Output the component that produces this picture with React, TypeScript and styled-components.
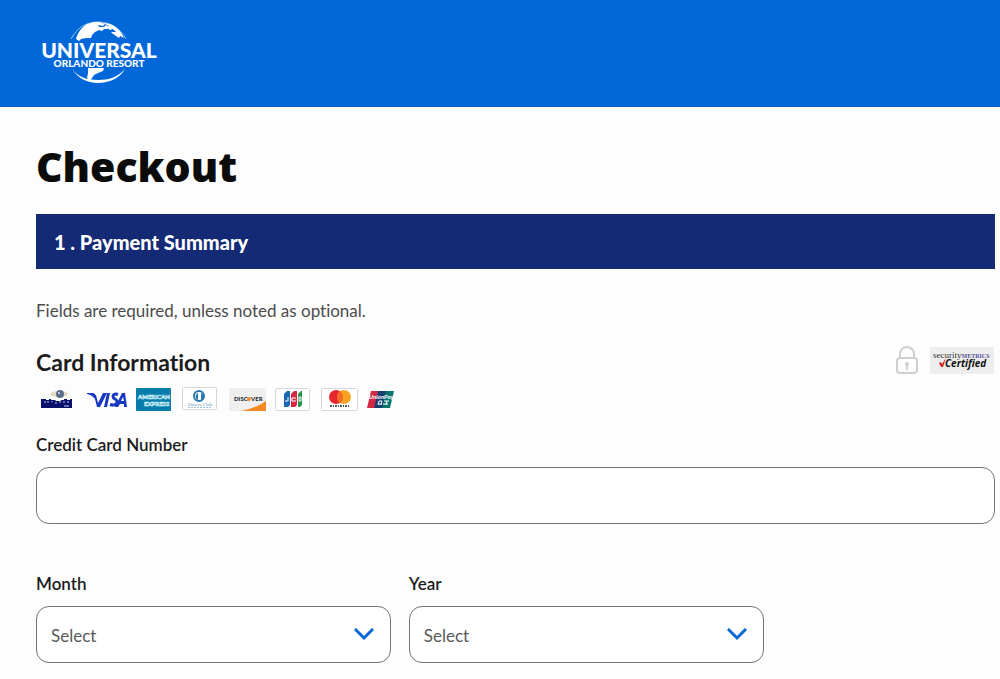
import React from "react";
import styled, { createGlobalStyle } from "styled-components";

const GlobalStyle = createGlobalStyle`
  *, *::before, *::after { box-sizing: border-box; }
  body {
    margin: 0;
    background: #fdfdfd;
    color: #1c1c1c;
    font-family: Lato, "Liberation Sans", sans-serif;
    font-size: 17px;
    font-variant-ligatures: none;
    line-height: 24px;
  }
`;

const Header = styled.header`
  display: flex;
  align-items: center;
  padding: 20px 40px 22px;
  background: #0268da;
  border-bottom: 1px solid #0a5cc0;
`;

const HomeLink = styled.a`
  display: block;
  height: 64px;
`;

const Main = styled.main`
  padding: 32px 5px 16px 36px;
`;

const Title = styled.h1`
  margin: 0;
  color: #0b0b0b;
  font-family: "Open Sans", sans-serif;
  font-size: 41px;
  font-weight: 800;
  line-height: 54px;
`;

const StepBar = styled.h2`
  margin: 21px 0 0;
  padding: 16px 18px 15px;
  background: #152a75;
  color: #fff;
  font-size: 20px;
  font-weight: 900;
  line-height: 24px;
`;

const Note = styled.p`
  margin: 30px 0 0;
  color: #4c4c4c;
`;

const SectionHead = styled.div`
  display: flex;
  align-items: flex-start;
  justify-content: space-between;
  margin-top: 23px;
`;

const SectionTitle = styled.h3`
  margin: 0;
  font-size: 23px;
  font-weight: 700;
  line-height: 32px;
`;

const Badges = styled.div`
  display: flex;
  align-items: center;
  gap: 11px;
  padding-right: 1px;
`;

const Cards = styled.ul`
  display: flex;
  align-items: center;
  gap: 9px;
  margin: 9px 0 0;
  padding: 0 5px;
  list-style: none;
`;

const CardItem = styled.li`
  display: flex;
  height: 26px;
`;

const Field = styled.div`
  display: flex;
  flex-direction: column;
  gap: 10px;
`;

const CardField = styled(Field)`
  margin-top: 20px;
`;

const Label = styled.label`
  font-size: 17px;
  font-weight: 600;
  line-height: 24px;
`;

const TextInput = styled.input`
  width: 100%;
  height: 57px;
  padding: 0 14px;
  border: 1px solid #747474;
  border-radius: 13px;
  background: #fff;
  color: #4c4c4c;
  font: inherit;
`;

const DateRow = styled.div`
  display: grid;
  grid-template-columns: 37% 37%;
  gap: 18px;
  margin-top: 48px;
`;

const SelectWrap = styled.div`
  display: grid;
  align-items: center;
  & > * { grid-area: 1 / 1; }
`;

const SelectBox = styled.select`
  appearance: none;
  width: 100%;
  height: 57px;
  padding: 2px 48px 0 14px;
  border: 1px solid #747474;
  border-radius: 13px;
  background: #fff;
  color: #5a5a5a;
  font: inherit;
`;

const Chevron = styled.svg`
  justify-self: end;
  margin-right: 17px;
  pointer-events: none;
`;

function ResortLogo() {
  return (
    <svg width="118" height="64" viewBox="0 0 118 64" role="img" aria-label="Universal Orlando Resort">
      <path d="M31 19C37 8 46 2 58 2s22 6 28 17" fill="none" stroke="#8fbdf0" strokeWidth="1" />
      <path d="M36 19C38 12 42 7 47 4l7-2 6 0 5 2-2 2-5-1 1 2 5 0 2-2 4 2-3 2-3 0-2 2-3-1-4 2-3 3-1 3h-5l-5 1-2 2z" fill="#fff" />
      <path d="M63 3c10 0 17 6 21 15l-4-2-1 2-6-4-2-2 5 0-3-3-3 1-3-2 2-2z" fill="#fff" />
      <path d="M32 49C38 58 47 63 58 63s22-5 27-14C78 57 69 60 58 60S38 57 32 49z" fill="#fff" />
      <path d="M48 48h16l-1 3-5 2-4 2-4 6-3-3 1-5z" fill="#fff" />
      <g fill="#fff" textAnchor="middle" fontFamily="Lato, sans-serif" fontWeight="900">
        <text x="59" y="38" fontSize="21">UNIVERSAL</text>
        <text x="59" y="47" fontSize="10">ORLANDO RESORT</text>
      </g>
    </svg>
  );
}

const frame = { fill: "#fff", stroke: "#d5d8db", strokeWidth: 1 };

const cards: { name: string; width: number; art: React.ReactNode }[] = [
  {
    name: "Universal Rewards",
    width: 36,
    art: (
      <>
        <ellipse cx="18" cy="7" rx="9" ry="3" fill="#e6d9bf" />
        <circle cx="19" cy="7" r="4" fill="#5a6f8e" />
        <circle cx="18" cy="6" r="1" fill="#d6e0ee" />
        <path d="M0 12h5v1h3v-1h2v1h4l1 1h4l2-1h2v-1h3v1h3v-1h2v9H0z" fill="#07106b" />
        <path d="M4 14v2M7 14v2M11 14v1M15 15v2M19 14v2M23 14v2M27 14v2M23 19h5" stroke="#cad0e8" strokeWidth="1" />
      </>
    ),
  },
  {
    name: "Visa",
    width: 41,
    art: (
      <>
        <path d="M1 6h6l2 1 2 8C9 11 6 8 1 7z" fill="#1838c4" />
        <path d="M8 8l3 12h3l7-14h-4l-5 10-2-8z" fill="#1838c4" />
        <path d="M21 6h3l-3 14h-3z" fill="#1838c4" />
        <path d="M32 7.500c-3-1-5 0-5 2 0 3 4 2 4 5 0 4-4 4-7 3" fill="none" stroke="#1838c4" strokeWidth="3" />
        <path d="M36 6h3l2 14h-3v-3h-4l-2 3h-3zM37 10l-2 4h3z" fill="#1838c4" fillRule="evenodd" />
      </>
    ),
  },
  {
    name: "American Express",
    width: 36,
    art: (
      <>
        <rect y="1" width="35" height="23" rx="1" fill="#087cab" />
        <g fill="#087cab" stroke="#d2f0fa" strokeWidth="0.6" fontFamily="Lato, sans-serif" fontWeight="900" fontSize="6">
          <text x="2" y="12">AMERICAN</text>
          <text x="8" y="19">EXPRESS</text>
        </g>
      </>
    ),
  },
  {
    name: "Diners Club",
    width: 37,
    art: (
      <>
        <rect x="1.5" y="0.5" width="34" height="22" rx="1" {...frame} />
        <circle cx="18" cy="9" r="5" fill="#fff" stroke="#2674ad" strokeWidth="2" />
        <path d="M17 6v7c-3-1-3-6 0-7M20 6v7c3-1 3-6 0-7" fill="#2674ad" />
        <text x="7" y="19" fill="#5b97c1" fontFamily="Liberation Serif, serif" fontSize="5">Diners Club</text>
        <path d="M7 20.500h23" stroke="#9fbfda" strokeWidth="1" strokeDasharray="2 1" />
      </>
    ),
  },
  {
    name: "Discover",
    width: 39,
    art: (
      <>
        <path d="M2 1h37v23H2z" fill="#efefef" />
        <path d="M39 14v10H14c10-2 18-5 25-10z" fill="#f58a24" />
        <text x="7" y="14" fill="#252c35" fontFamily="Lato, sans-serif" fontSize="6" fontWeight="900">DISC</text>
        <circle cx="22" cy="12" r="2" fill="#f58a24" />
        <text x="24" y="14" fill="#252c35" fontFamily="Lato, sans-serif" fontSize="6" fontWeight="900">VER</text>
      </>
    ),
  },
  {
    name: "JCB",
    width: 36,
    art: (
      <>
        <rect x="0.5" y="1.500" width="34" height="22" rx="1" {...frame} />
        <path d="M12 4h3v14l-2 2H9V7z" fill="#1767b2" />
        <path d="M19 4h3v14l-2 2h-4V7z" fill="#d72947" />
        <path d="M26 4h1v14l-2 2h-2V7z" fill="#249448" />
        <path d="M13 10v4h-3M21 11h-4v3h4M24 10v4h2v-4z" fill="none" stroke="#fff" strokeWidth="1" />
      </>
    ),
  },
  {
    name: "Mastercard",
    width: 38,
    art: (
      <>
        <rect x="1.5" y="1.500" width="36" height="22" rx="1" {...frame} />
        <circle cx="16" cy="10" r="7" fill="#e82630" />
        <circle cx="24" cy="10" r="7" fill="#f7a321" />
        <path d="M20 4c4 3 4 9 0 12-4-3-4-9 0-12z" fill="#f36825" />
        <path d="M10 19h20" stroke="#555" strokeWidth="2" strokeDasharray="2 1 1 1" />
      </>
    ),
  },
  {
    name: "UnionPay",
    width: 28,
    art: (
      <>
        <path d="M4 4h8L8 21H0z" fill="#d42843" />
        <path d="M11 4h9l-4 17H7z" fill="#173f70" />
        <path d="M19 4h8l-4 17h-8z" fill="#08766e" />
        <text x="2" y="12" fill="#fff" fontFamily="Lato, sans-serif" fontSize="6" fontWeight="700" fontStyle="italic">UnionPay</text>
        <path d="M12 14h3M17 14h5M11 17h4M16 17h5M12 14l-1 4M15 14l-1 4M20 14l-1 4" stroke="#fff" strokeWidth="1" />
      </>
    ),
  },
];

function LockIcon() {
  return (
    <svg width="24" height="28" viewBox="0 0 24 28" fill="none" stroke="#cfcfcf" strokeWidth="2" role="img" aria-label="Secure">
      <path d="M5 12V8a7 7 0 0 1 14 0v4" />
      <rect x="2" y="12" width="20" height="15" rx="3" />
      <path d="M12 19v5" />
      <circle cx="12" cy="18" r="1" />
    </svg>
  );
}

function CertifiedBadge() {
  return (
    <svg width="64" height="27" viewBox="0 0 64 27" role="img" aria-label="securityMETRICS Certified">
      <rect width="64" height="27" fill="#eee" />
      <text x="3" y="11" fontFamily="Liberation Serif, serif" fontSize="9" fill="#333">
        security<tspan fontSize="6" fontWeight="700" fill="#5550a0">METRICS</tspan>
      </text>
      <text x="15" y="20" fontFamily="Open Sans, sans-serif" fontSize="10" fontWeight="700" fontStyle="italic" fill="#111">Certified</text>
      <path d="M9 16l2-1 1 2 4-6-3 9h-2z" fill="#d9252c" />
    </svg>
  );
}

function DateSelect({ id, label, options }: { id: string; label: string; options: string[] }) {
  return (
    <Field>
      <Label htmlFor={id}>{label}</Label>
      <SelectWrap>
        <SelectBox id={id} defaultValue="">
          <option value="">Select</option>
          {options.map((option) => (
            <option key={option} value={option}>{option}</option>
          ))}
        </SelectBox>
        <Chevron width="20" height="13" viewBox="0 0 20 13" fill="none" stroke="#0768d6" strokeWidth="3" strokeLinecap="square" aria-hidden="true">
          <path d="M2 2l8 8 8-8" />
        </Chevron>
      </SelectWrap>
    </Field>
  );
}

const months = Array.from({ length: 12 }, (_, i) => String(i + 1).padStart(2, "0"));
const years = Array.from({ length: 10 }, (_, i) => String(2024 + i));

export default function App() {
  return (
    <>
      <GlobalStyle />
      <Header>
        <HomeLink href="#"><ResortLogo /></HomeLink>
      </Header>
      <Main>
        <Title>Checkout</Title>
        <StepBar>1 . Payment Summary</StepBar>
        <Note>Fields are required, unless noted as optional.</Note>
        <form>
          <SectionHead>
            <SectionTitle>Card Information</SectionTitle>
            <Badges>
              <LockIcon />
              <CertifiedBadge />
            </Badges>
          </SectionHead>
          <Cards>
            {cards.map(({ name, width, art }) => (
              <CardItem key={name}>
                <svg width={width} height="26" viewBox={`0 0 ${width} 26`} role="img" aria-label={name}>{art}</svg>
              </CardItem>
            ))}
          </Cards>
          <CardField>
            <Label htmlFor="card-number">Credit Card Number</Label>
            <TextInput id="card-number" inputMode="numeric" autoComplete="cc-number" />
          </CardField>
          <DateRow>
            <DateSelect id="month" label="Month" options={months} />
            <DateSelect id="year" label="Year" options={years} />
          </DateRow>
        </form>
      </Main>
    </>
  );
}
